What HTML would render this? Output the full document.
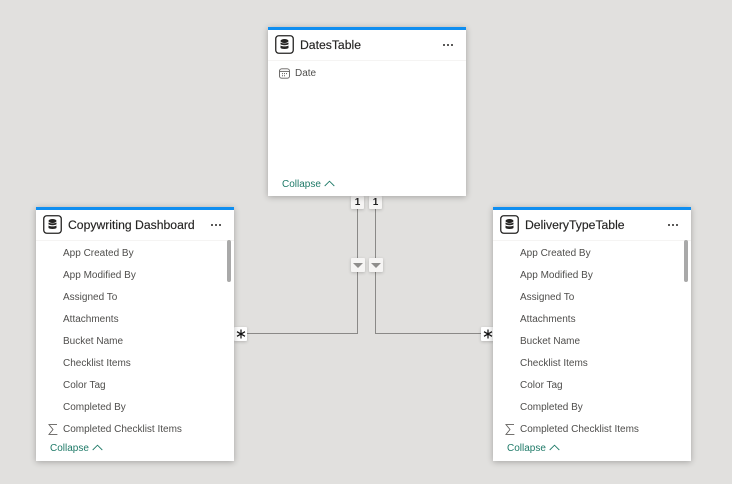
<!DOCTYPE html>
<html><head><meta charset="utf-8">
<style>
html,body{margin:0;padding:0;width:732px;height:484px;overflow:hidden;background:#e1e0de;}
body{position:relative;font-family:"Liberation Sans",sans-serif;}
#w{position:absolute;left:0;top:0;width:732px;height:484px;filter:blur(0.3px);}
.card{position:absolute;width:198px;background:#fff;border-top:3px solid #0f8ef0;box-sizing:border-box;box-shadow:0 1px 6px rgba(0,0,0,.28);}
.ic{position:absolute;left:7px;top:5px;}
.t{position:absolute;left:32px;top:8px;font-size:12.2px;line-height:15px;color:#252423;white-space:nowrap;-webkit-text-stroke:.15px #252423;}
.dots{position:absolute;left:175px;top:13.5px;width:11px;height:2px;}
.dots i{position:absolute;top:0;width:2px;height:2px;border-radius:1px;background:#252423;}
.hr{position:absolute;left:0;right:0;top:30px;height:1px;background:#f5f4f3;}
.f{position:absolute;left:27px;font-size:10px;line-height:14px;color:#4f4e4c;white-space:nowrap;}
.c{position:absolute;left:14px;font-size:10px;line-height:14px;color:#1f7a68;white-space:nowrap;}
.sb{position:absolute;left:191px;top:30px;width:4px;height:42px;background:#a9a9a9;border-radius:2px;}
.l{position:absolute;background:#8a8987;}
.b{position:absolute;background:#f6f5f4;box-shadow:0 1px 3px rgba(0,0,0,.2);text-align:center;color:#222;border-radius:1px;}
.one{width:13px;height:13px;font:bold 10px/14px "Liberation Sans",sans-serif;}
.arr{width:14px;height:14px;}
.arr i{position:absolute;left:2px;top:5px;width:0;height:0;border-left:5px solid transparent;border-right:5px solid transparent;border-top:5px solid #8f8e8c;}
.st{width:13px;height:14px;background:#fff;}
.st svg{position:absolute;left:1.5px;top:2px;}
.sg{position:absolute;left:12px;}
</style></head><body><div id="w">
<div class="l" style="left:357px;top:196px;width:1px;height:138px"></div>
<div class="l" style="left:375px;top:196px;width:1px;height:138px"></div>
<div class="l" style="left:234px;top:333px;width:124px;height:1px"></div>
<div class="l" style="left:375px;top:333px;width:120px;height:1px"></div>
<div class="b one" style="left:351px;top:196px">1</div>
<div class="b one" style="left:369px;top:196px">1</div>
<div class="b arr" style="left:351px;top:258px"><i></i></div>
<div class="b arr" style="left:369px;top:258px"><i></i></div>
<div class="b st" style="left:234px;top:327px"><svg width="10" height="10" viewBox="0 0 10 10" stroke="#111" stroke-width="1.2"><path d="M5 .5v9M1 2.7l8 4.6M9 2.7L1 7.3"/></svg></div>
<div class="b st" style="left:481px;top:327px"><svg width="10" height="10" viewBox="0 0 10 10" stroke="#111" stroke-width="1.2"><path d="M5 .5v9M1 2.7l8 4.6M9 2.7L1 7.3"/></svg></div>

<div class="card" style="left:268px;top:27px;height:169px">
<svg class="ic" width="19" height="19" viewBox="0 0 19 19"><rect x=".75" y=".75" width="17.5" height="17.5" rx="3" fill="#fff" stroke="#252423" stroke-width="1.3"/><ellipse cx="9.5" cy="6" rx="4" ry="2" fill="#252423"/><path d="M5.5 7.5c1 1.2 7 1.2 8 0v1.8c-1 1.2-7 1.2-8 0zM5.5 10.5c1 1.2 7 1.2 8 0v2.5c-1 1.3-7 1.3-8 0z" fill="#252423"/></svg>
<div class="t">DatesTable</div>
<div class="dots"><i style="left:0"></i><i style="left:4px"></i><i style="left:8px"></i></div>
<div class="hr"></div>
<svg style="position:absolute;left:11px;top:37.5px" width="11" height="11" viewBox="0 0 11 11" fill="none" stroke="#605e5c" stroke-width=".9"><rect x=".5" y=".8" width="10" height="9.4" rx="2.2"/><path d="M.8 3.4h9.4"/><path d="M3 5.6h1M5 5.6h1M7 5.6h1M3 7.8h1M5 7.8h1" stroke-width="1"/></svg>
<div class="f" style="top:37px">Date</div>
<div class="c" style="top:148px">Collapse <svg width="11" height="7" viewBox="0 0 11 7" fill="none" stroke="#1f7a68" stroke-width=".9"><path d="M.7 6L5.5 1.2 10.3 6"/></svg></div>
</div>

<div class="card" style="left:36px;top:207px;height:254px">
<svg class="ic" width="19" height="19" viewBox="0 0 19 19"><rect x=".75" y=".75" width="17.5" height="17.5" rx="3" fill="#fff" stroke="#252423" stroke-width="1.3"/><ellipse cx="9.5" cy="6" rx="4" ry="2" fill="#252423"/><path d="M5.5 7.5c1 1.2 7 1.2 8 0v1.8c-1 1.2-7 1.2-8 0zM5.5 10.5c1 1.2 7 1.2 8 0v2.5c-1 1.3-7 1.3-8 0z" fill="#252423"/></svg>
<div class="t">Copywriting Dashboard</div>
<div class="dots"><i style="left:0"></i><i style="left:4px"></i><i style="left:8px"></i></div>
<div class="hr"></div>
<div class="sb"></div>
<div class="f" style="top:37px">App Created By</div>
<div class="f" style="top:59px">App Modified By</div>
<div class="f" style="top:81px">Assigned To</div>
<div class="f" style="top:103px">Attachments</div>
<div class="f" style="top:125px">Bucket Name</div>
<div class="f" style="top:147px">Checklist Items</div>
<div class="f" style="top:169px">Color Tag</div>
<div class="f" style="top:191px">Completed By</div>
<div class="f" style="top:213px">Completed Checklist Items</div>
<svg class="sg" style="top:214px" width="10" height="11" viewBox="0 0 10 11" fill="none" stroke="#605e5c" stroke-width=".9"><path d="M9 .6H1l4 4.9-4 4.9h8.4"/></svg>
<div class="c" style="top:232px">Collapse <svg width="11" height="7" viewBox="0 0 11 7" fill="none" stroke="#1f7a68" stroke-width=".9"><path d="M.7 6L5.5 1.2 10.3 6"/></svg></div>
</div>

<div class="card" style="left:493px;top:207px;height:254px">
<svg class="ic" width="19" height="19" viewBox="0 0 19 19"><rect x=".75" y=".75" width="17.5" height="17.5" rx="3" fill="#fff" stroke="#252423" stroke-width="1.3"/><ellipse cx="9.5" cy="6" rx="4" ry="2" fill="#252423"/><path d="M5.5 7.5c1 1.2 7 1.2 8 0v1.8c-1 1.2-7 1.2-8 0zM5.5 10.5c1 1.2 7 1.2 8 0v2.5c-1 1.3-7 1.3-8 0z" fill="#252423"/></svg>
<div class="t">DeliveryTypeTable</div>
<div class="dots"><i style="left:0"></i><i style="left:4px"></i><i style="left:8px"></i></div>
<div class="hr"></div>
<div class="sb"></div>
<div class="f" style="top:37px">App Created By</div>
<div class="f" style="top:59px">App Modified By</div>
<div class="f" style="top:81px">Assigned To</div>
<div class="f" style="top:103px">Attachments</div>
<div class="f" style="top:125px">Bucket Name</div>
<div class="f" style="top:147px">Checklist Items</div>
<div class="f" style="top:169px">Color Tag</div>
<div class="f" style="top:191px">Completed By</div>
<div class="f" style="top:213px">Completed Checklist Items</div>
<svg class="sg" style="top:214px" width="10" height="11" viewBox="0 0 10 11" fill="none" stroke="#605e5c" stroke-width=".9"><path d="M9 .6H1l4 4.9-4 4.9h8.4"/></svg>
<div class="c" style="top:232px">Collapse <svg width="11" height="7" viewBox="0 0 11 7" fill="none" stroke="#1f7a68" stroke-width=".9"><path d="M.7 6L5.5 1.2 10.3 6"/></svg></div>
</div>
</div></body></html>
